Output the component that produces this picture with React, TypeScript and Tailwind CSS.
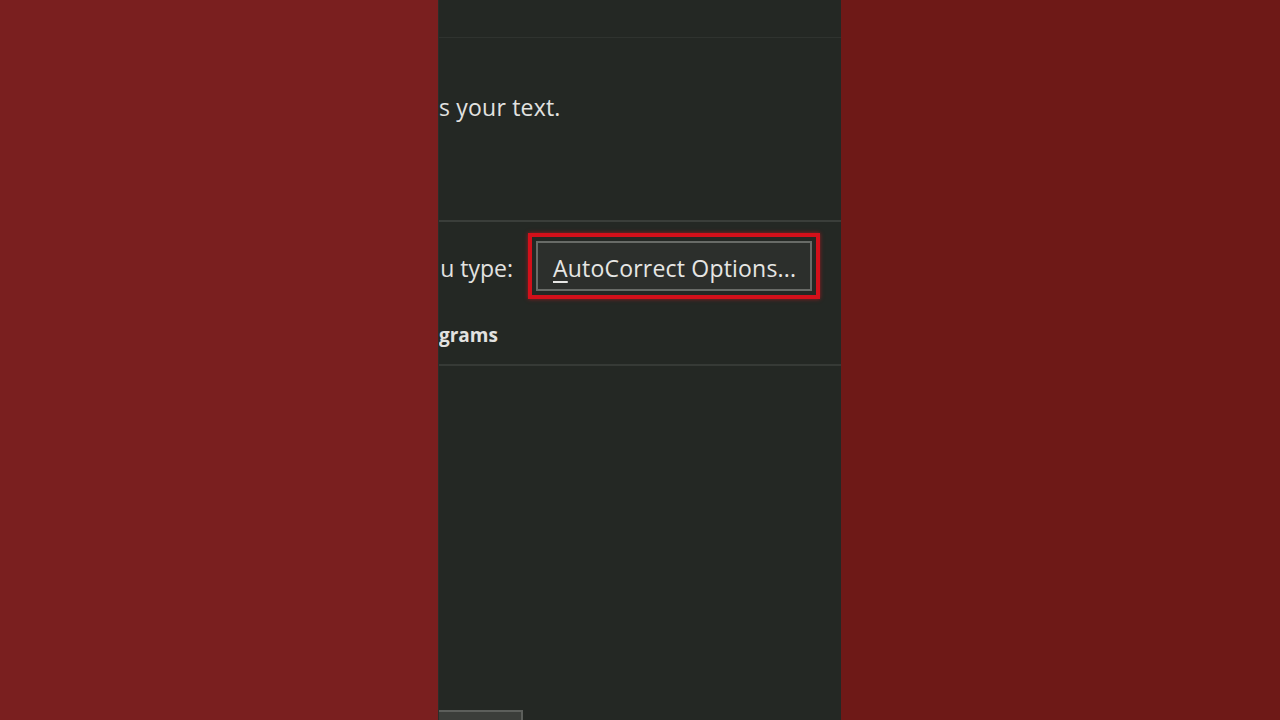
import React from "react";

export default function App() {
  const font = { fontFamily: '"Open Sans", "Noto Sans", "Liberation Sans", sans-serif' };
  return (
    <div className="flex h-[720px] w-[1280px] overflow-hidden" style={font}>
      <div className="w-[438px] h-full bg-[#7a1f1f]" />
      <div className="relative w-[403px] h-full bg-[#242824] overflow-hidden flex flex-col border-l border-[#2a2e2a]">
        <div className="h-[38px] shrink-0 border-b border-[#2f332f]" />
        <div className="h-[184px] shrink-0 border-b-2 border-[#3a3e3a] pt-[54px]">
          <div className="whitespace-nowrap">
            <span className="text-[23px] leading-[30px] text-[#e2e2e0] tracking-[0.2px]">s your text.</span>
          </div>
        </div>
        <div className="shrink-0 pt-[11px] flex items-center">
          <div className="w-[74px] flex justify-end whitespace-nowrap pt-[4px]">
            <span className="text-[23px] leading-[28px] text-[#e2e2e0]">u type:</span>
          </div>
          <div className="ml-[15px] w-[292px] h-[66px] border-[4px] border-[#d3101a] shadow-[0_0_4px_rgba(230,20,30,0.6)] p-[4px]">
            <div className="w-full h-full border-2 border-[#686b67] bg-[#2c2f2c] flex items-center pl-[15px] pt-[4px]">
              <span className="text-[23px] leading-[28px] text-[#e6e6e4] whitespace-nowrap tracking-[0.2px]">
                <span className="underline decoration-2 underline-offset-[4px]">A</span>utoCorrect Options...
              </span>
            </div>
          </div>
        </div>
        <div className="shrink-0 h-[67px] border-b-2 border-[#363a36] pt-[22px]">
          <div className="whitespace-nowrap">
            <span className="text-[19px] leading-[28px] font-bold text-[#e2e2e0]">grams</span>
          </div>
        </div>
        <div className="flex-1" />
        <div className="shrink-0 w-[84px] h-[10px] border-t-2 border-r-2 border-[#5c5f5b] bg-[#3b3e3a]" />
      </div>
      <div className="flex-1 h-full bg-[#6e1917]" />
    </div>
  );
}
